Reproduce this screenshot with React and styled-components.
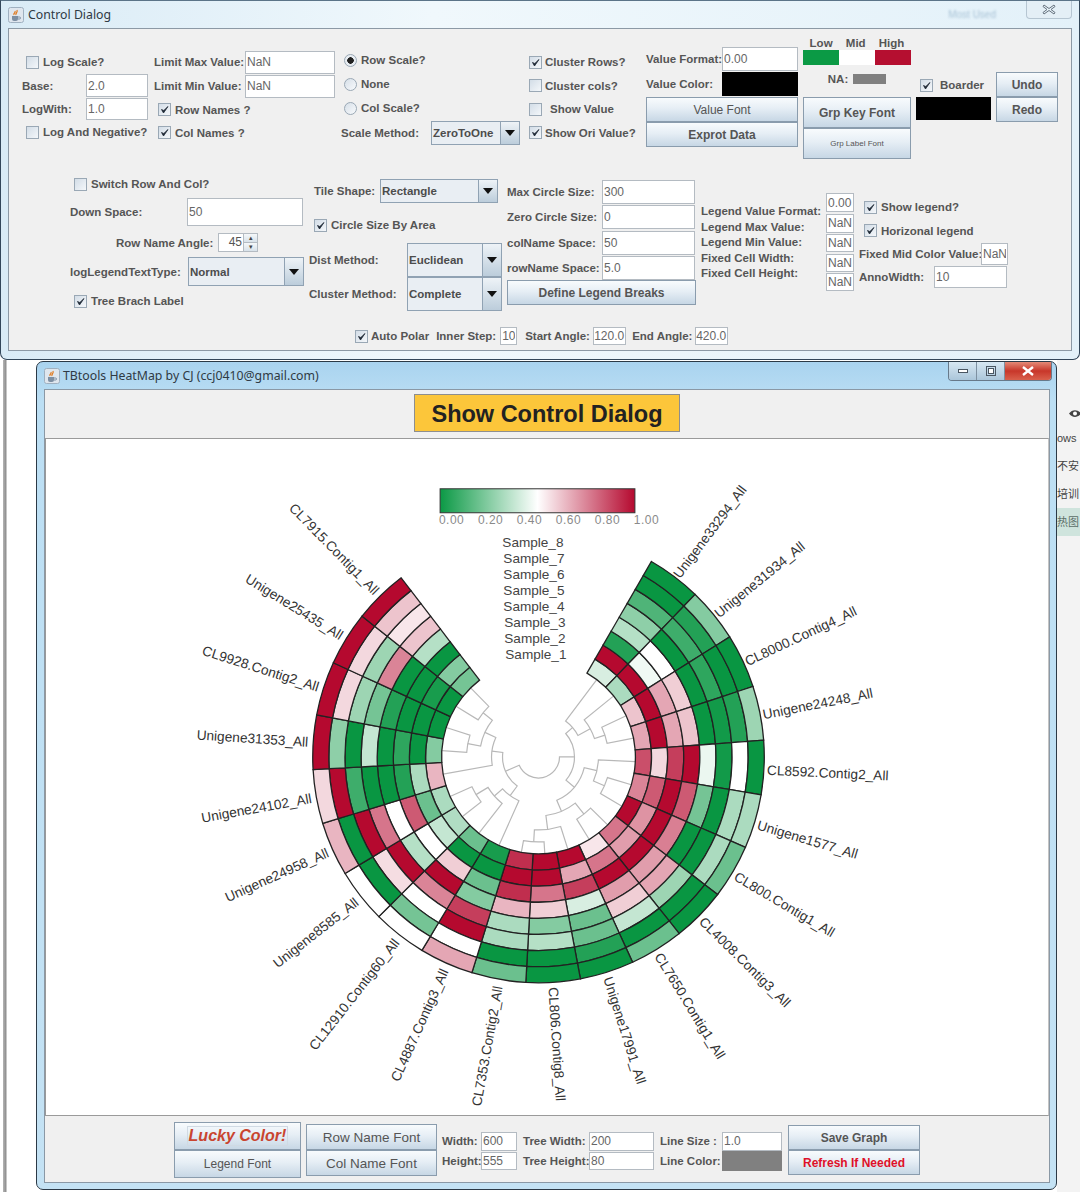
import styled, { createGlobalStyle } from "styled-components"

const GlobalStyle = createGlobalStyle`
  html, body {
    margin: 0;
    padding: 0;
    background: #fff;
  }
  body {
    width: 1080px;
    height: 1192px;
    overflow: hidden;
    font-family: "Liberation Sans", Arial, sans-serif;
  }
`

// heat map data, one column per gene, clockwise from the top right
// each value runs inner ring (Sample_1) to outer ring (Sample_8)
const genes = [
  ["Unigene33294_All", [0.42, 1, 0.1, 0.35, 0.27, 0.18, 0.05, 0]],
  ["Unigene31934_All", [0.33, 0.97, 0.47, 0.5, 0.03, 0.15, 0.1, 0.25]],
  ["CL8000.Contig4_All", [0.62, 0.95, 0.68, 0.6, 0.05, 0.12, 0.05, 0]],
  ["Unigene24248_All", [0.68, 0.97, 0.68, 0.62, 0.02, 0.07, 0.1, 0.3]],
  ["CL8592.Contig2_All", [0.82, 0.58, 0.85, 0.98, 0.46, 0.07, 0.5, 0.02]],
  ["Unigene1577_All", [0.75, 0.8, 0.97, 0.8, 0.22, 0.02, 0.33, 0.33]],
  ["CL800.Contig1_All", [0.95, 0.72, 0.97, 0.76, 0.02, 0.02, 0.33, 0.2]],
  ["CL4008.Contig3_All", [0.78, 0.7, 0.97, 0.7, 0.68, 0.3, 0.02, 0]],
  ["CL7650.Contig1_All", [0.55, 0.78, 0.97, 0.7, 0.6, 0.38, 0.02, 0.2]],
  ["Unigene17991_All", [0.97, 0.68, 0.85, 0.42, 0.2, 0.2, 0.1, 0.03]],
  ["CL806.Contig8_All", [0.97, 0.97, 0.78, 0.6, 0.25, 0.35, 0.02, 0.02]],
  ["CL7353.Contig2_All", [0.88, 0.97, 0.88, 0.65, 0.33, 0.33, 0.02, 0.2]],
  ["CL4887.Contig3_All", [0.08, 0, 0.2, 0.25, 0.85, 0.98, 0.5, 0.68]],
  ["CL12910.Contig60_All", [0.2, 0.02, 0.6, 0.98, 0.75, 0.5, 0.22, 0.5]],
  ["Unigene8585_All", [0.34, 0.38, 0.5, 0.35, 0.97, 0.57, 0.02, 0.5]],
  ["Unigene24958_All", [0.33, 0.2, 0.8, 0.5, 0.78, 0.97, 0.03, 0.65]],
  ["Unigene24102_All", [0.65, 0.33, 0.1, 0.05, 0.03, 0.15, 0.97, 0.58]],
  ["Unigene31353_All", [0.25, 0.03, 0.12, 0.03, 0.38, 0.03, 0.27, 0.97]],
  ["CL9928.Contig2_All", [0.03, 0.02, 0.05, 0.1, 0.22, 0.3, 0.58, 0.97]],
  ["Unigene25435_All", [0.03, 0.08, 0.02, 0.03, 0.75, 0.3, 0.58, 0.97]],
  ["CL7915.Contig1_All", [0.22, 0.25, 0.02, 0.35, 0.62, 0.55, 0.62, 0.98]],
]

const CX = 538
const CY = 757
const INNER = 97
const OUTER = 226
const START = 30
const STEP = 13.93
const RING = (OUTER - INNER) / 8

const LOW = [9, 150, 66]
const HIGH = [181, 9, 47]

function heatColor(t) {
  const to = t < 0.5 ? LOW : HIGH
  let k = t < 0.5 ? 1 - t * 2 : t * 2 - 1
  if (k > 0.6) k = Math.min(1, k * 1.12)
  const c = to.map((v) => Math.round(255 + (v - 255) * k))
  return `rgb(${c[0]},${c[1]},${c[2]})`
}

function polar(r, deg) {
  const a = (deg * Math.PI) / 180
  return [CX + r * Math.sin(a), CY - r * Math.cos(a)]
}

function cellPath(r1, r2, a1, a2) {
  const [x1, y1] = polar(r1, a1)
  const [x2, y2] = polar(r2, a1)
  const [x3, y3] = polar(r2, a2)
  const [x4, y4] = polar(r1, a2)
  return `M${x1} ${y1}L${x2} ${y2}A${r2} ${r2} 0 0 1 ${x3} ${y3}L${x4} ${y4}A${r1} ${r1} 0 0 0 ${x1} ${y1}Z`
}

// dendrogram: [radius, left, right], numbers are leaves (1 based column)
const tree = [
  21,
  [
    36,
    [45, 1, [59, 2, [70, 3, 4]]],
    [
      47,
      [60, 5, [72, 6, 7]],
      [59, [73, 8, 9], [73, 10, [85, 11, 12]]],
    ],
  ],
  [
    36,
    [48, 13, [59, 14, [73, 15, 16]]],
    [47, 17, [59, [72, 18, 19], [71, 20, 21]]],
  ],
]

function treePaths(node, out) {
  if (typeof node === "number") {
    return { r: INNER, a: START + STEP * (node - 0.5) }
  }
  const [r, left, right] = node
  const l = treePaths(left, out)
  const h = treePaths(right, out)
  const [x1, y1] = polar(r, l.a)
  const [x2, y2] = polar(r, h.a)
  const [lx, ly] = polar(l.r, l.a)
  const [hx, hy] = polar(h.r, h.a)
  const big = h.a - l.a > 180 ? 1 : 0
  out.push(`M${lx} ${ly}L${x1} ${y1}A${r} ${r} 0 ${big} 1 ${x2} ${y2}L${hx} ${hy}`)
  return { r, a: (l.a + h.a) / 2 }
}

const branchPaths = []
treePaths(tree, branchPaths)

const sampleRows = [
  ["Sample_8", 563],
  ["Sample_7", 564],
  ["Sample_6", 564],
  ["Sample_5", 564],
  ["Sample_4", 564],
  ["Sample_3", 565],
  ["Sample_2", 565],
  ["Sample_1", 566],
]

const legendTicks = [
  ["0.00", 451],
  ["0.20", 490],
  ["0.40", 529],
  ["0.60", 568],
  ["0.80", 607],
  ["1.00", 646],
]

const Chart = () => (
  <ChartSvg viewBox="45 439 1003 676">
    <defs>
      <linearGradient id="legendRamp">
        <stop offset="0" stopColor="#0b9945" />
        <stop offset="0.5" stopColor="#fff" />
        <stop offset="1" stopColor="#b5092f" />
      </linearGradient>
    </defs>
    <rect x="439.5" y="488.5" width="195" height="24" fill="url(#legendRamp)" stroke="#333" />
    {legendTicks.map(([text, x]) => (
      <LegendTick key={text} x={x} y="524" textAnchor="middle">
        {text}
      </LegendTick>
    ))}
    {sampleRows.map(([text, x], i) => (
      <SampleText key={text} x={x} y={547 + i * 16} textAnchor="end">
        {text}
      </SampleText>
    ))}
    <g fill="none" stroke="#b8b8b8" strokeWidth="1.2">
      {branchPaths.map((d, i) => (
        <path key={i} d={d} />
      ))}
    </g>
    <g stroke="#222" strokeWidth="1.3">
      {genes.map(([name, values], col) =>
        values.map((v, ring) => (
          <path
            key={name + ring}
            d={cellPath(
              INNER + RING * ring,
              INNER + RING * (ring + 1),
              START + STEP * col,
              START + STEP * (col + 1)
            )}
            fill={heatColor(v)}
          />
        ))
      )}
    </g>
    {genes.map(([name], col) => {
      const deg = START + STEP * (col + 0.5)
      const right = deg < 180
      const [x, ringY] = polar(OUTER + (right ? 3 : 5), deg)
      // labels sit a little lower than the rings, more so towards the bottom
      const y = ringY + (right ? 2 : Math.max(0, -Math.cos((deg * Math.PI) / 180)) * 2)
      const turn = right ? deg - 90 : deg + 90
      return (
        <GeneText
          key={name}
          x={x}
          y={y}
          dy="5"
          textAnchor={right ? "start" : "end"}
          transform={`rotate(${turn} ${x} ${y})`}
        >
          {name}
        </GeneText>
      )
    })}
  </ChartSvg>
)

const JavaIcon = () => (
  <svg width="16" height="16" viewBox="0 0 16 16">
    <rect x="0.5" y="0.5" width="15" height="15" rx="2" fill="#dfe6ee" stroke="#9fb0c0" />
    <path d="M4 9h6v3a2 2 0 0 1-2 2H6a2 2 0 0 1-2-2z" fill="#7d8fa3" />
    <path d="M10 10h1.5a1 1 0 0 1 0 2H10" fill="none" stroke="#7d8fa3" />
    <path d="M6 8c-1-2 2-2 1-4M8 8c-1-2 2-2 1-5" fill="none" stroke="#e07a1f" strokeWidth="1.2" />
  </svg>
)

const Tick = () => (
  <svg width="11" height="11" viewBox="0 0 11 11">
    <path d="M2.5 5.5 L4.5 9 L9 2.5 L4.8 6.5 Z" fill="#1f2a36" stroke="#1f2a36" strokeWidth="0.8" />
  </svg>
)

const ArrowDown = () => (
  <svg width="10" height="6" viewBox="0 0 10 6">
    <path d="M0 0h10L5 6z" fill="#111" />
  </svg>
)

const Option = ({ on, label, gap }) => (
  <>
    <CheckBox>{on && <Tick />}</CheckBox>
    <OptionText $gap={gap}>{label}</OptionText>
  </>
)

const RadioOption = ({ on, label }) => (
  <>
    <RadioDot $on={on} />
    <OptionText $gap={4}>{label}</OptionText>
  </>
)

const Combo = ({ w, h, value }) => (
  <ComboBox $w={w} $h={h}>
    <ComboValue>{value}</ComboValue>
    <ComboArrow>
      <ArrowDown />
    </ComboArrow>
  </ComboBox>
)

export default function App() {
  return (
    <>
      <GlobalStyle />
      <Page>
        <DialogFrame>
          <TitleBar>
            <JavaIcon />
            <TitleText>Control Dialog</TitleText>
            <FadedTask>Most Used</FadedTask>
            <DialogClose>
              <svg width="14" height="11" viewBox="0 0 14 11">
                <path
                  d="M2 1l5 3.5L12 1l1 1.5-4 3 4 3-1 1.5-5-3.5L2 10 1 8.5l4-3-4-3z"
                  fill="none"
                  stroke="#66727e"
                />
              </svg>
            </DialogClose>
          </TitleBar>
          <DialogBody>
            <TopSection>
              <Column $w={128}>
                <Row $pl={4}><Option label="Log Scale?" /></Row>
                <Row $h={23}>
                  <Label $w={64}>Base:</Label>
                  <TextBox $w={62} $h={23} defaultValue="2.0" />
                </Row>
                <Row $h={23}>
                  <Label $w={64}>LogWith:</Label>
                  <TextBox $w={62} $h={22} defaultValue="1.0" />
                </Row>
                <Row $pl={4}><Option label="Log And Negative?" /></Row>
              </Column>
              <Column $w={190}>
                <Row $pl={4}>
                  <Label $w={91}>Limit Max Value:</Label>
                  <TextBox $w={90} $h={23} defaultValue="NaN" />
                </Row>
                <Row $pl={4}>
                  <Label $w={91}>Limit Min Value:</Label>
                  <TextBox $w={90} $h={23} defaultValue="NaN" />
                </Row>
                <Row $pl={8} $h={23}><Option on label="Row Names ?" /></Row>
                <Row $pl={8} $h={23}><Option on label="Col Names ?" /></Row>
              </Column>
              <Column $w={187} $top={-2}>
                <Row $pl={4}><RadioOption on label="Row Scale?" /></Row>
                <Row $pl={4}><RadioOption label="None" /></Row>
                <Row $pl={4}><RadioOption label="Col Scale?" /></Row>
                <Row $h={26}>
                  <Label $w={90} $ml={1}>Scale Method:</Label>
                  <Combo w={89} h={24} value="ZeroToOne" />
                </Row>
              </Column>
              <Column $w={119}>
                <Row $pl={2}><Option on gap={3} label="Cluster Rows?" /></Row>
                <Row $pl={2} $h={23}><Option gap={3} label="Cluster cols?" /></Row>
                <Row $pl={2}><Option label="Show Value" gap={8} /></Row>
                <Row $pl={2} $h={23}><Option on gap={3} label="Show Ori Value?" /></Row>
              </Column>
              <Column $w={157} $top={-3}>
                <Row>
                  <Label $w={76}>Value Format:</Label>
                  <TextBox $w={76} $h={24} defaultValue="0.00" />
                </Row>
                <Row $h={26}>
                  <Label $w={76}>Value Color:</Label>
                  <Swatch $w={76} $h={24} $color="#000" />
                </Row>
                <JavaButton $w={152} $h={25} $plain>Value Font</JavaButton>
                <JavaButton $w={152} $h={25}>Exprot Data</JavaButton>
              </Column>
              <Column $w={113} $top={-14}>
                <LevelHeads>
                  <Label>Low</Label>
                  <Label>Mid</Label>
                  <Label>High</Label>
                </LevelHeads>
                <LevelBar>
                  <Swatch $color="#0b9a45" />
                  <Swatch $color="#fff" />
                  <Swatch $color="#b50f30" />
                </LevelBar>
                <NaRow>
                  <Label>NA:</Label>
                  <Swatch $w={33} $h={10} $color="#808080" />
                </NaRow>
                <JavaButton $w={108} $h={31}>Grp Key Font</JavaButton>
                <JavaButton $w={108} $h={31} $tiny>Grp Label Font</JavaButton>
              </Column>
              <Column $w={80} $top={23}>
                <Row $pl={4}><Option on label="Boarder" gap={7} /></Row>
                <Swatch $w={75} $h={23} $color="#000" />
              </Column>
              <Column $w={62} $top={22}>
                <JavaButton $w={62} $h={25}>Undo</JavaButton>
                <JavaButton $w={62} $h={25}>Redo</JavaButton>
              </Column>
            </TopSection>

            <MiddleSection>
              <Column $w={239}>
                <Row $pl={4}><Option label="Switch Row And Col?" /></Row>
                <Row $h={28} $mt={2}>
                  <Label $w={117}>Down Space:</Label>
                  <TextBox $w={116} $h={28} defaultValue="50" />
                </Row>
                <Row $h={19} $mt={7} $pl={46}>
                  <Label $w={102}>Row Name Angle:</Label>
                  <Spinner>
                    <SpinValue>45</SpinValue>
                    <SpinButtons>
                      <SpinButton>▴</SpinButton>
                      <SpinButton>▾</SpinButton>
                    </SpinButtons>
                  </Spinner>
                </Row>
                <Row $h={29} $mt={5}>
                  <Label $w={118}>logLegendTextType:</Label>
                  <Combo w={116} h={29} value="Normal" />
                </Row>
                <Row $pl={4} $mt={3}><Option on label="Tree Brach Label" /></Row>
              </Column>
              <Column $w={198} $top={7}>
                <Row $pl={5}>
                  <Label $w={66}>Tile Shape:</Label>
                  <Combo w={118} h={24} value="Rectangle" />
                </Row>
                <Row $pl={5} $mt={10}><Option on label="Circle Size By Area" /></Row>
                <Row $h={34} $mt={6}>
                  <Label $w={98}>Dist Method:</Label>
                  <Combo w={95} h={34} value="Euclidean" />
                </Row>
                <Row $h={34}>
                  <Label $w={98}>Cluster Method:</Label>
                  <Combo w={95} h={34} value="Complete" />
                </Row>
              </Column>
              <Column $w={194} $top={7}>
                <Row $h={25}>
                  <Label $w={95}>Max Circle Size:</Label>
                  <TextBox $w={93} $h={24} defaultValue="300" />
                </Row>
                <Row $h={26}>
                  <Label $w={95}>Zero Circle Size:</Label>
                  <TextBox $w={93} $h={24} defaultValue="0" />
                </Row>
                <Row $h={25}>
                  <Label $w={95}>colName Space:</Label>
                  <TextBox $w={93} $h={24} defaultValue="50" />
                </Row>
                <Row $h={25}>
                  <Label $w={95}>rowName Space:</Label>
                  <TextBox $w={93} $h={24} defaultValue="5.0" />
                </Row>
                <JavaButton $w={189} $h={25}>Define Legend Breaks</JavaButton>
              </Column>
              <LegendColumn>
                <LegendLabels>
                  <Label>Legend Value Format:</Label>
                  <Label>Legend Max Value:</Label>
                  <Label>Legend Min Value:</Label>
                  <Label>Fixed Cell Width:</Label>
                  <Label>Fixed Cell Height:</Label>
                </LegendLabels>
                <LegendBoxes>
                  <TextBox $w={28} $h={19} defaultValue="0.00" />
                  <TextBox $w={28} $h={19} defaultValue="NaN" />
                  <TextBox $w={28} $h={18} defaultValue="NaN" />
                  <TextBox $w={28} $h={18} defaultValue="NaN" />
                  <TextBox $w={28} $h={18} defaultValue="NaN" />
                </LegendBoxes>
              </LegendColumn>
              <Column $w={150} $top={23}>
                <Row $pl={5}><Option on label="Show legend?" /></Row>
                <Row $pl={5} $h={23}><Option on label="Horizonal legend" /></Row>
                <Row $h={23}>
                  <Label $w={122}>Fixed Mid Color Value:</Label>
                  <TextBox $w={27} $h={22} defaultValue="NaN" />
                </Row>
                <Row $h={23}>
                  <Label $w={75}>AnnoWidth:</Label>
                  <TextBox $w={73} $h={22} defaultValue="10" />
                </Row>
              </Column>
            </MiddleSection>

            <PolarSection>
              <Option on gap={3} label="Auto Polar" />
              <Label $w={64} $ml={7}>Inner Step:</Label>
              <TextBox $w={17} $h={18} defaultValue="10" />
              <Label $w={68} $ml={8}>Start Angle:</Label>
              <TextBox $w={33} $h={18} $tight defaultValue="120.0" />
              <Label $w={63} $ml={6}>End Angle:</Label>
              <TextBox $w={33} $h={18} $tight defaultValue="420.0" />
            </PolarSection>
          </DialogBody>
        </DialogFrame>

        <Desk>
          <LeftStrip />
          <HeatWindow>
            <HeatTitleBar>
              <JavaIcon />
              <TitleText>TBtools HeatMap by CJ (ccj0410@gmail.com)</TitleText>
              <WindowButtons>
                <WindowButton $w={27}>
                  <svg width="10" height="4" viewBox="0 0 10 4">
                    <rect x="0.5" y="0.5" width="9" height="3" fill="#fff" stroke="#4a5662" />
                  </svg>
                </WindowButton>
                <WindowButton $w={27}>
                  <svg width="10" height="10" viewBox="0 0 10 10">
                    <rect x="0.5" y="0.5" width="9" height="9" fill="none" stroke="#4a5662" />
                    <rect x="2.5" y="2.5" width="5" height="5" fill="#fff" stroke="#4a5662" />
                  </svg>
                </WindowButton>
                <CloseButton>
                  <svg width="12" height="10" viewBox="0 0 12 10">
                    <path d="M1 1l10 8M11 1L1 9" stroke="#fff" strokeWidth="2.4" />
                  </svg>
                </CloseButton>
              </WindowButtons>
            </HeatTitleBar>
            <HeatBody>
              <ShowBar>
                <ShowButton>Show Control Dialog</ShowButton>
              </ShowBar>
              <Canvas>
                <Chart />
              </Canvas>
              <BottomBar>
                <ButtonStack $w={127} $top={6}>
                  <JavaButton $w={127} $h={28} $lucky><LuckyText>Lucky Color!</LuckyText></JavaButton>
                  <JavaButton $w={127} $h={28} $plain>Legend Font</JavaButton>
                </ButtonStack>
                <ButtonStack $w={131} $top={8} $ml={5}>
                  <JavaButton $w={131} $h={26} $large>Row Name Font</JavaButton>
                  <JavaButton $w={131} $h={26} $large>Col Name Font</JavaButton>
                </ButtonStack>
                <ButtonStack $w={75} $top={15} $ml={5}>
                  <Row $h={20}>
                    <Label $w={39}>Width:</Label>
                    <TextBox $w={36} $h={19} defaultValue="600" />
                  </Row>
                  <Row $h={19}>
                    <Label $w={39}>Height:</Label>
                    <TextBox $w={36} $h={18} defaultValue="555" />
                  </Row>
                </ButtonStack>
                <ButtonStack $w={131} $top={15} $ml={6}>
                  <Row $h={20}>
                    <Label $w={66}>Tree Width:</Label>
                    <TextBox $w={65} $h={19} defaultValue="200" />
                  </Row>
                  <Row $h={19}>
                    <Label $w={66}>Tree Height:</Label>
                    <TextBox $w={65} $h={18} defaultValue="80" />
                  </Row>
                </ButtonStack>
                <ButtonStack $w={122} $top={15} $ml={6}>
                  <Row $h={20}>
                    <Label $w={62}>Line Size :</Label>
                    <TextBox $w={60} $h={19} defaultValue="1.0" />
                  </Row>
                  <Row $h={19}>
                    <Label $w={62}>Line Color:</Label>
                    <Swatch $w={60} $h={20} $color="#808080" />
                  </Row>
                </ButtonStack>
                <ButtonStack $w={132} $top={9} $ml={6}>
                  <JavaButton $w={132} $h={25}>Save Graph</JavaButton>
                  <JavaButton $w={132} $h={25} $danger>Refresh If Needed</JavaButton>
                </ButtonStack>
              </BottomBar>
            </HeatBody>
          </HeatWindow>
          <SideStrip>
            <SideEye>
              <svg width="12" height="9" viewBox="0 0 12 9">
                <path d="M0 4.5C3 0 9 0 12 4.5 9 9 3 9 0 4.5z" fill="#444" />
                <circle cx="6" cy="4.5" r="2" fill="#fff" />
              </svg>
            </SideEye>
            <SideText>ows</SideText>
            <SideText>不安</SideText>
            <SideText>培训</SideText>
            <SideBand>热图</SideBand>
          </SideStrip>
        </Desk>
      </Page>
    </>
  )
}

const Page = styled.div`
  width: 1080px;
  height: 1192px;
  display: flex;
  flex-direction: column;
  overflow: hidden;
`

const DialogFrame = styled.div`
  box-sizing: border-box;
  width: 1080px;
  height: 360px;
  flex: none;
  display: flex;
  flex-direction: column;
  padding: 0 7px 8px;
  background: linear-gradient(90deg, #d9ebf6, #f0f8fc 40%, #e3f1f9);
  border: 1px solid #33475a;
  border-top-color: #5b7488;
  border-radius: 0 0 7px 7px;
`

const TitleBar = styled.div`
  height: 27px;
  flex: none;
  display: flex;
  align-items: center;
  gap: 4px;
`

const TitleText = styled.span`
  font-family: "Noto Sans", "Liberation Sans", sans-serif;
  font-size: 12.3px;
  color: #2f3a44;
`

const FadedTask = styled.span`
  margin-left: auto;
  margin-right: 26px;
  font-size: 10px;
  color: #a9c3d6;
  filter: blur(1px);
`

const DialogClose = styled.div`
  width: 46px;
  height: 18px;
  margin-top: -9px;
  display: flex;
  align-items: center;
  justify-content: center;
  background: #e4eff6;
  border: 1px solid #b6c6d2;
  border-top: none;
  border-radius: 0 0 4px 4px;
  box-sizing: border-box;
`

const DialogBody = styled.div`
  flex: 1;
  background: #f0f0f0;
  border: 1px solid #8c99a5;
  display: flex;
  flex-direction: column;
  min-height: 0;
`

const TopSection = styled.div`
  height: 122px;
  padding: 21px 0 0 13px;
  display: flex;
  align-items: flex-start;
  flex: none;
`

const MiddleSection = styled.div`
  height: 155px;
  padding-left: 61px;
  display: flex;
  align-items: flex-start;
  flex: none;
`

const PolarSection = styled.div`
  display: flex;
  align-items: center;
  height: 18px;
  padding-left: 346px;
`

const Column = styled.div`
  width: ${(p) => p.$w}px;
  flex: none;
  margin-top: ${(p) => p.$top || 0}px;
  display: flex;
  flex-direction: column;
`

const Row = styled.div`
  height: ${(p) => p.$h || 24}px;
  margin-top: ${(p) => p.$mt || 0}px;
  padding-left: ${(p) => p.$pl || 0}px;
  display: flex;
  align-items: center;
  flex: none;
`

const Label = styled.span`
  flex: none;
  width: ${(p) => (p.$w ? `${p.$w}px` : "auto")};
  margin-left: ${(p) => p.$ml || 0}px;
  font-size: 11.5px;
  font-weight: 700;
  line-height: 14px;
  color: #555;
  white-space: nowrap;
`

const OptionText = styled(Label)`
  margin-left: ${(p) => p.$gap || 4}px;
`

const CheckBox = styled.span`
  box-sizing: border-box;
  width: 13px;
  height: 13px;
  flex: none;
  display: flex;
  align-items: center;
  justify-content: center;
  background: linear-gradient(135deg, #d3dde7, #f4f7fa);
  border: 1px solid #9aa8b5;
`

const RadioDot = styled.span`
  box-sizing: border-box;
  width: 13px;
  height: 13px;
  flex: none;
  border-radius: 50%;
  border: 1px solid #9aa8b5;
  background: ${(p) =>
    p.$on
      ? "radial-gradient(circle, #222 0 3px, #e8edf2 3.5px)"
      : "linear-gradient(135deg, #d6dfe8, #f8fafc)"};
`

const TextBox = styled.input.attrs({ readOnly: true, type: "text" })`
  box-sizing: border-box;
  width: ${(p) => p.$w}px;
  height: ${(p) => p.$h}px;
  flex: none;
  padding: 0 ${(p) => (p.$tight ? 0 : 1)}px;
  margin: 0;
  background: #fff;
  border: 1px solid #b4bbc2;
  border-radius: 0;
  outline: none;
  font-family: "Liberation Sans", Arial, sans-serif;
  font-size: 12px;
  color: #666;
`

const Swatch = styled.div`
  flex: ${(p) => (p.$w ? "none" : "1")};
  width: ${(p) => (p.$w ? `${p.$w}px` : "auto")};
  height: ${(p) => (p.$h ? `${p.$h}px` : "auto")};
  background: ${(p) => p.$color};
`

const JavaButton = styled.div`
  box-sizing: border-box;
  width: ${(p) => p.$w}px;
  height: ${(p) => p.$h}px;
  flex: none;
  display: flex;
  align-items: center;
  justify-content: center;
  background: linear-gradient(#f8fbfd, #e6eef5 45%, #c7d7e5);
  border: 1px solid #8a9cad;
  font-size: ${(p) => (p.$tiny ? 8 : p.$large ? 13.5 : 12)}px;
  font-weight: ${(p) => (p.$plain || p.$large || p.$tiny ? 400 : 700)};
  color: ${(p) => (p.$danger ? "#df1029" : "#555")};
  white-space: nowrap;
`

const LuckyText = styled.span`
  padding: 0 1px;
  border: 1px solid #d0dae3;
  font-size: 16px;
  font-style: italic;
  font-weight: 700;
  color: #c9452f;
`

const LevelHeads = styled.div`
  width: 108px;
  height: 14px;
  display: flex;
  justify-content: space-around;
`

const LevelBar = styled.div`
  width: 108px;
  height: 15px;
  display: flex;
`

const NaRow = styled.div`
  width: 108px;
  height: 12px;
  margin: 8px 0 12px;
  display: flex;
  align-items: center;
  justify-content: center;
  gap: 5px;
`

const ComboBox = styled.div`
  box-sizing: border-box;
  width: ${(p) => p.$w}px;
  height: ${(p) => p.$h}px;
  flex: none;
  display: flex;
  background: #e9eef3;
  border: 1px solid #90a2b3;
`

const ComboValue = styled.span`
  flex: 1;
  display: flex;
  align-items: center;
  padding-left: 1px;
  font-size: 11.5px;
  font-weight: 700;
  color: #4c4c4c;
`

const ComboArrow = styled.span`
  width: 18px;
  display: flex;
  align-items: center;
  justify-content: center;
  background: linear-gradient(#eef3f7, #bccddb);
  border-left: 1px solid #90a2b3;
`

const Spinner = styled.div`
  box-sizing: border-box;
  width: 40px;
  height: 19px;
  display: flex;
  background: #fff;
  border: 1px solid #b4bbc2;
`

const SpinValue = styled.span`
  flex: 1;
  text-align: right;
  padding-right: 1px;
  font-size: 12px;
  line-height: 17px;
  color: #555;
`

const SpinButtons = styled.div`
  width: 14px;
  display: flex;
  flex-direction: column;
`

const SpinButton = styled.span`
  flex: 1;
  display: flex;
  align-items: center;
  justify-content: center;
  font-size: 7px;
  color: #444;
  background: linear-gradient(#f5f8fa, #d8e2ea);
  border-left: 1px solid #b4bbc2;
  border-bottom: 1px solid #b4bbc2;
`

const LegendColumn = styled.div`
  width: 158px;
  flex: none;
  display: flex;
`

const LegendLabels = styled.div`
  width: 125px;
  padding-top: 32px;
  display: flex;
  flex-direction: column;
  gap: 1.5px;
`

const LegendBoxes = styled.div`
  margin-top: 21px;
  display: flex;
  flex-direction: column;
  gap: 1.5px;
`

const Desk = styled.div`
  flex: 1;
  min-height: 0;
  display: flex;
`

const LeftStrip = styled.div`
  box-sizing: border-box;
  width: 36px;
  flex: none;
  background: linear-gradient(90deg, #fff 3px, #b5b5b5 3px, #8d8d8d 6px, #fff 7px);
`

const HeatWindow = styled.div`
  box-sizing: border-box;
  width: 1021px;
  height: 829px;
  margin-top: 1px;
  flex: none;
  display: flex;
  flex-direction: column;
  padding: 0 6px 6px 7px;
  background: linear-gradient(#a9d3ef, #bcdff4 40px, #c4e2f4);
  border: 1px solid #2b3946;
  border-radius: 7px;
`

const HeatTitleBar = styled.div`
  height: 27px;
  flex: none;
  display: flex;
  align-items: center;
  gap: 3px;
`

const WindowButtons = styled.div`
  margin-left: auto;
  margin-right: -2px;
  align-self: flex-start;
  display: flex;
  height: 18px;
  border: 1px solid #67798a;
  border-top: none;
  border-radius: 0 0 4px 4px;
  overflow: hidden;
`

const WindowButton = styled.span`
  width: ${(p) => p.$w}px;
  display: flex;
  align-items: center;
  justify-content: center;
  background: linear-gradient(#d7e7f2, #abc6da);
  border-right: 1px solid #7d90a1;
`

const CloseButton = styled.span`
  width: 46px;
  display: flex;
  align-items: center;
  justify-content: center;
  background: linear-gradient(#e48a77, #c8372a 50%, #d9604c);
`

const HeatBody = styled.div`
  flex: 1;
  min-height: 0;
  background: #f0f0f0;
  border: 1px solid #8a98a5;
  display: flex;
  flex-direction: column;
`

const ShowBar = styled.div`
  height: 48px;
  flex: none;
  display: flex;
  justify-content: center;
  padding-top: 4px;
  box-sizing: border-box;
`

const ShowButton = styled.div`
  box-sizing: border-box;
  width: 266px;
  height: 38px;
  display: flex;
  align-items: center;
  justify-content: center;
  padding-top: 2px;
  background: #fcc63a;
  border: 1px solid #8e8e8e;
  font-size: 23.5px;
  font-weight: 700;
  color: #222;
`

const Canvas = styled.div`
  box-sizing: border-box;
  height: 678px;
  flex: none;
  background: #fff;
  border: 1px solid #9a9a9a;
  border-right-color: #c4c4c4;
`

const ChartSvg = styled.svg`
  display: block;
  width: 100%;
  height: 100%;
`

const LegendTick = styled.text`
  font-family: "Liberation Sans", Arial, sans-serif;
  font-size: 12px;
  letter-spacing: 0.5px;
  fill: #8a8a8a;
`

const SampleText = styled.text`
  font-family: "Liberation Sans", Arial, sans-serif;
  font-size: 13.6px;
  fill: #444;
`

const GeneText = styled.text`
  font-family: "Liberation Sans", Arial, sans-serif;
  font-size: 13.7px;
  fill: #333;
`

const BottomBar = styled.div`
  flex: 1;
  display: flex;
  align-items: flex-start;
  padding-left: 129px;
`

const ButtonStack = styled.div`
  width: ${(p) => p.$w}px;
  flex: none;
  margin-top: ${(p) => p.$top}px;
  margin-left: ${(p) => p.$ml || 0}px;
  display: flex;
  flex-direction: column;
`

const SideStrip = styled.div`
  flex: 1;
  padding-top: 44px;
  background: #f3f3f3;
  overflow: hidden;
  display: flex;
  flex-direction: column;
`

const SideEye = styled.span`
  height: 20px;
  padding-left: 12px;
`

const SideText = styled.span`
  height: 28px;
  line-height: 28px;
  white-space: nowrap;
  font-family: "Liberation Sans", "Noto Sans CJK SC", sans-serif;
  font-size: 11px;
  color: #444;
`

const SideBand = styled(SideText)`
  background: #cfe4dd;
  color: #5c6f68;
`
